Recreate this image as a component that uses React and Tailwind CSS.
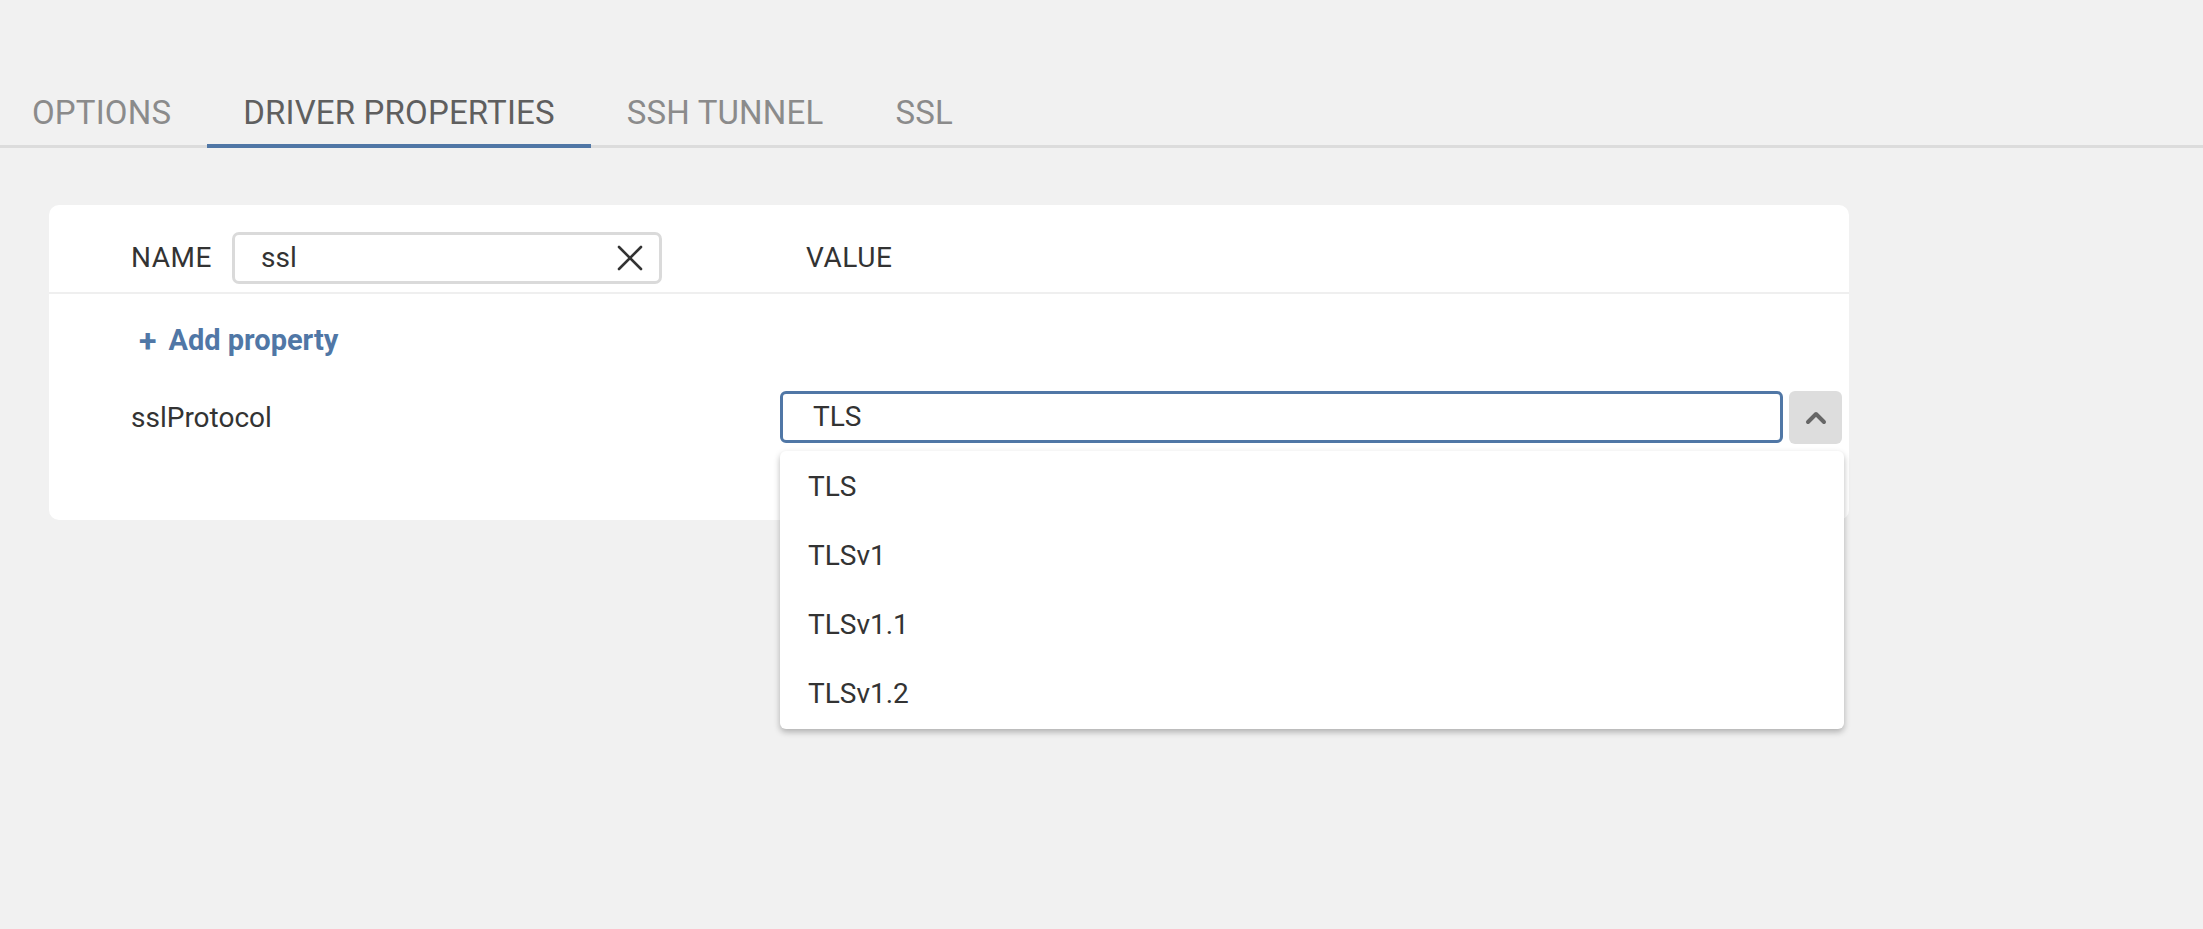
import React from "react"
import { useState } from "react"

const tabs = ["Options", "Driver properties", "SSH tunnel", "SSL"]
const protocols = ["TLS", "TLSv1", "TLSv1.1", "TLSv1.2"]

const App = () => {
  const [active, setActive] = useState(1)
  const [name, setName] = useState("ssl")
  const [value, setValue] = useState("TLS")
  const [open, setOpen] = useState(true)

  return (
    <div className="min-h-screen w-full bg-[#f1f1f1] pt-[73px] font-['Roboto','Liberation_Sans',sans-serif] text-[#333]">
      {/* Tabs */}
      <div className="flex border-b-[3px] border-[#dcdcdc]">
        <div className="flex -ml-[4px]">
          {tabs.map((tab, i) => (
            <button
              key={tab}
              onClick={() => setActive(i)}
              className={`h-[75px] px-[36px] -mb-[3px] pt-[8px] border-b-[4px] text-[33px] uppercase tracking-[0.005em] ${
                active === i
                  ? "border-[#5077a6] text-[#5f5f5f]"
                  : "border-transparent text-[#8b8b8b]"
              }`}
            >
              {tab}
            </button>
          ))}
        </div>
      </div>

      {/* Properties card */}
      <div className="ml-[49px] mt-[57px] w-[1800px] bg-white rounded-[10px]">
        <div className="flex h-[89px] items-start border-b-2 border-[#efefef] pl-[82px] pt-[27px]">
          <span className="mr-[20px] leading-[52px] text-[28px] tracking-[0.02em]">NAME</span>
          <div className="flex h-[52px] w-[430px] items-center rounded-[7px] border-[3px] border-[#dadada] pl-[26px] pr-[15px]">
            <input
              value={name}
              onChange={(e) => setName(e.target.value)}
              className="flex-1 min-w-0 bg-transparent text-[28px] text-[#333] outline-none"
            />
            <svg width="28" height="28" viewBox="0 0 28 28" fill="none" stroke="#333" strokeWidth="2.6" strokeLinecap="round">
              <path d="M3 3L25 25M25 3L3 25" />
            </svg>
          </div>
          <span className="ml-[144px] leading-[52px] text-[28px] tracking-[0.02em]">VALUE</span>
        </div>

        <div className="pt-[21px] pb-[76px] pl-[82px] pr-[7px]">
          <div className="flex h-[52px] items-center pl-[8px]">
            <button className="flex items-center text-[29px] font-bold text-[#5077a6]">
              <span className="mr-[12px] text-[32px] leading-none">+</span>
              Add property
            </button>
          </div>

          <div className="mt-[24px] flex items-center">
            <span className="w-[649px] text-[28px]">sslProtocol</span>
            <div className="relative flex flex-1 gap-[6px]">
              <div className="flex h-[52px] flex-1 items-center rounded-[6px] border-[3px] border-[#5077a6] pl-[30px]">
                <span className="text-[28px]">{value}</span>
              </div>
              <button
                onClick={() => setOpen(!open)}
                className="flex h-[53px] w-[53px] items-center justify-center rounded-[6px] bg-[#dddddd]"
              >
                <svg width="22" height="14" viewBox="0 0 22 14" fill="none" stroke="#666" strokeWidth="4" strokeLinecap="round" strokeLinejoin="round">
                  <path d="M3 11L11 3L19 11" />
                </svg>
              </button>

              {open && (
                <div className="absolute left-0 right-[-2px] top-[60px] z-10 rounded-[6px] bg-white py-[1px] shadow-[0_3px_6px_rgba(0,0,0,0.28)]">
                  {protocols.map((p) => (
                    <div
                      key={p}
                      onClick={() => {
                        setValue(p)
                        setOpen(false)
                      }}
                      className="flex h-[69px] cursor-pointer items-center pl-[28px] text-[28px] hover:bg-gray-50"
                    >
                      {p}
                    </div>
                  ))}
                </div>
              )}
            </div>
          </div>
        </div>
      </div>
    </div>
  )
}

export default App
